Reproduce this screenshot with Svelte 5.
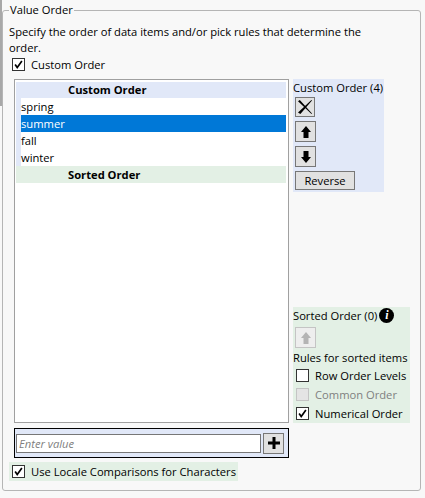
<script>
	const customItems = ['spring', 'summer', 'fall', 'winter'];
	let selected = 'summer';
</script>

<div class="edge"></div>

<fieldset class="group">
	<legend>Value Order</legend>
	<p class="desc">Specify the order of data items and/or pick rules that determine the order.</p>
	<label class="check top">
		<span class="box"><svg viewBox="0 0 13 13"><path d="M2.5 6.5 5 10 10.5 2.5" /></svg></span>
		Custom Order
	</label>

	<div class="main">
		<div class="left">
			<div class="listbox">
				<div class="head custom">Custom Order</div>
				<ul>
					{#each customItems as item}
						<li class:sel={item === selected}>{item}</li>
					{/each}
				</ul>
				<div class="head sorted">Sorted Order</div>
			</div>
			<div class="entry">
				<input type="text" placeholder="Enter value" />
				<button class="btn plus" aria-label="Add">
					<svg viewBox="0 0 14 14"><path d="M5.5 1h3v4.5H13v3H8.5V13h-3V8.5H1v-3h4.5z" /></svg>
				</button>
			</div>
		</div>

		<div class="side">
			<div class="panel blue">
				<div class="title">Custom Order (4)</div>
				<button class="btn icon x" aria-label="Remove">
					<svg viewBox="0 0 14 14"><path d="M0 1.2 1.8 0 14 13.4 13.5 14zM13.4 0 14 .6 2.4 14 0 12.6z" /></svg>
				</button>
				<button class="btn icon" aria-label="Move up">
					<svg viewBox="0 0 14 14"><path d="M7 1 12 7H9.5v6h-5V7H2z" /></svg>
				</button>
				<button class="btn icon" aria-label="Move down">
					<svg viewBox="0 0 14 14"><path d="M7 13 12 7H9.5V1h-5v6H2z" /></svg>
				</button>
				<button class="btn reverse">Reverse</button>
			</div>

			<div class="panel green">
				<div class="title">Sorted Order (0)<span class="info">i</span></div>
				<button class="btn icon off" aria-label="Move up" disabled>
					<svg viewBox="0 0 14 14"><path d="M7 1 12 7H9.5v6h-5V7H2z" /></svg>
				</button>
				<div class="rules">Rules for sorted items</div>
				<label class="check"><span class="box"></span>Row Order Levels</label>
				<label class="check dim"><span class="box"></span>Common Order</label>
				<label class="check">
					<span class="box"><svg viewBox="0 0 13 13"><path d="M2.5 6.5 5 10 10.5 2.5" /></svg></span>
					Numerical Order
				</label>
			</div>
		</div>
	</div>

	<label class="check locale">
		<span class="box"><svg viewBox="0 0 13 13"><path d="M2.5 6.5 5 10 10.5 2.5" /></svg></span>
		Use Locale Comparisons for Characters
	</label>
</fieldset>

<style>
	:global(body) {
		background: #f8f8f8;
		color: #000;
		font-family: 'Open Sans', 'Noto Sans', sans-serif;
		font-size: 11.2px;
		margin: 0;
	}

	/* sliver of a scrollbar thumb along the window edge */
	.edge {
		position: absolute;
		left: 0;
		top: 0;
		width: 2px;
		height: 106px;
		background: #a8a8a8;
	}

	.group {
		box-sizing: border-box;
		width: 419px;
		height: 488px;
		margin: 3px 0 0 2px;
		padding: 0 6px;
		border: 1px solid #b5b5b5;
		border-radius: 3px;
	}

	legend {
		padding: 0 1px;
		line-height: 14px;
	}

	.desc {
		margin: 7px 0 0;
		line-height: 16px;
		width: 375px;
	}

	.check {
		display: flex;
		align-items: center;
		gap: 6px;
		height: 19px;
		white-space: nowrap;
	}

	.top {
		margin: -1px 0 5px 3px;
	}

	.box {
		box-sizing: border-box;
		width: 13px;
		height: 13px;
		flex: none;
		background: #fff;
		border: 1px solid #333;
	}

	.box svg {
		display: block;
		width: 11px;
		height: 11px;
		fill: none;
		stroke: #000;
		stroke-width: 2;
	}

	.main {
		display: flex;
		gap: 4px;
		margin-left: 5px;
	}

	.left {
		width: 275px;
	}

	.listbox {
		box-sizing: border-box;
		height: 344px;
		padding: 2px 2px 0 1px;
		background: #fff;
		border: 1px solid #a0a0a0;
	}

	.head {
		height: 17px;
		padding-left: 52px;
		line-height: 17px;
		font-weight: 700;
	}

	.custom {
		background: #e1e8f8;
		height: 16px;
		line-height: 16px;
	}

	.sorted {
		background: #e3f0e5;
	}

	ul {
		list-style: none;
		margin: 0;
		padding: 0 0 0 5px;
		background: #e1e8f8;
	}

	li {
		height: 17px;
		line-height: 17px;
		background: #fff;
	}

	li.sel {
		background: #0078d7;
		color: #fff;
	}

	.entry {
		box-sizing: border-box;
		display: flex;
		align-items: center;
		gap: 2px;
		height: 30px;
		margin-top: 5px;
		padding: 0 4px 0 1px;
		background: #e1e8f8;
		border: 1px solid #000;
	}

	input {
		box-sizing: border-box;
		flex: 1;
		min-width: 0;
		height: 19px;
		padding: 0 2px;
		font: inherit;
		background: #fff;
		border: 1px solid #777;
		outline: none;
	}

	input::placeholder {
		color: #808080;
		font-style: italic;
		opacity: 1;
	}

	.btn {
		box-sizing: border-box;
		display: flex;
		align-items: center;
		justify-content: center;
		padding: 0;
		font: inherit;
		color: #000;
		background: #e1e1e1;
		border: 1px solid #777;
	}

	.plus {
		width: 21px;
		height: 21px;
	}

	.plus svg {
		width: 14px;
		height: 14px;
	}

	.side {
		display: flex;
		flex-direction: column;
		justify-content: space-between;
		height: 344px;
	}

	.blue {
		box-sizing: border-box;
		width: 91px;
		height: 113px;
		background: #e1e8f8;
	}

	.green {
		box-sizing: border-box;
		width: 117px;
		height: 116px;
		background: #e3f0e5;
	}

	.title {
		display: flex;
		align-items: center;
		height: 16px;
		white-space: nowrap;
	}

	.icon {
		width: 21px;
		height: 21px;
		margin: 0 0 4px 2px;
	}

	.icon.x {
		width: 20px;
		height: 20px;
		margin-top: 2px;
	}

	.icon svg {
		width: 14px;
		height: 14px;
	}

	.reverse {
		width: 60px;
		height: 19px;
		margin-left: 2px;
	}

	.off {
		margin: 4px 0 2px 2px;
		background: #eee;
		border-color: #c4c4c4;
	}

	.off svg {
		fill: #b4b4b4;
	}

	.info {
		display: inline-block;
		width: 15px;
		height: 15px;
		margin-left: 2px;
		border-radius: 50%;
		background: #000;
		color: #fff;
		font: italic 700 12px/15px 'Liberation Serif', serif;
		text-align: center;
	}

	.rules {
		height: 16px;
		line-height: 16px;
	}

	.green .check {
		margin-left: 3px;
	}

	.dim {
		color: #808080;
	}

	.dim .box {
		background: #e4e4e4;
		border-color: #c4c4c4;
	}

	.locale {
		display: inline-flex;
		margin-top: 4px;
		padding: 0 2px 0 3px;
		background: #e3f0e5;
	}
</style>
